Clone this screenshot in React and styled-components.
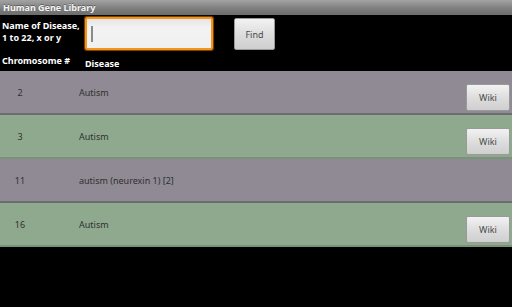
import React from "react";
import styled, { createGlobalStyle } from "styled-components";

const Global = createGlobalStyle`
  html, body { margin: 0; padding: 0; background: #000; }
  body { font-family: "Noto Sans", "Open Sans", "DejaVu Sans", sans-serif; }
  * { box-sizing: border-box; }
`;

const Screen = styled.div`
  width: 512px;
  height: 307px;
  background: #000;
  display: flex;
  flex-direction: column;
  overflow: hidden;
`;

const TitleBar = styled.div`
  height: 15px;
  padding-left: 3px;
  display: flex;
  align-items: center;
  background: linear-gradient(#a3a3a3, #7c7c7c 60%, #6c6c6c);
  color: #f4f4f4;
  font-size: 9px;
  font-weight: 700;
  text-shadow: 0 -1px 0 rgba(0,0,0,0.35);
`;

const SearchRow = styled.div`
  height: 37px;
  display: flex;
  align-items: flex-start;
`;

const Label = styled.div`
  width: 85px;
  padding-left: 2px;
  margin-top: 5px;
  color: #fff;
  font-size: 9px;
  font-weight: 700;
  line-height: 12px;
`;

const Input = styled.div`
  margin-top: 2px;
  width: 128px;
  height: 33px;
  border: 2px solid #f7921c;
  border-radius: 2px;
  background: linear-gradient(#e4e4e4, #f3f3f3 30%, #f0f0f0);
  box-shadow: 0 0 1px 1px rgba(255, 150, 0, 0.5);
  display: flex;
  align-items: center;
  padding-left: 4px;
`;

const Caret = styled.span`
  width: 2px;
  height: 16px;
  background: #8a8a8a;
`;

const Button = styled.div`
  width: ${(p) => p.$w}px;
  height: ${(p) => p.$h}px;
  margin-top: ${(p) => p.$top}px;
  margin-left: ${(p) => p.$left || 0}px;
  margin-right: ${(p) => p.$right || 0}px;
  border: 1px solid #9a9a9a;
  border-radius: 2px;
  background: linear-gradient(#f2f2f2, #dcdcdc 55%, #cfcfcf);
  color: #4a4a4a;
  font-size: 9px;
  display: flex;
  align-items: center;
  justify-content: center;
  flex-shrink: 0;
`;

const HeaderRow = styled.div`
  height: 19px;
  display: flex;
`;

const HeaderCell = styled.div`
  width: ${(p) => p.$w}px;
  padding-left: 2px;
  padding-top: ${(p) => p.$top}px;
  color: #fff;
  font-size: 9px;
  font-weight: 700;
  line-height: 10px;
`;

const Row = styled.div`
  height: 44px;
  display: flex;
  align-items: flex-start;
  background: ${(p) => (p.$green ? "#8fa98e" : "#8f8a93")};
  border-bottom: 2px solid ${(p) => (p.$green ? "#789377" : "#6e6a72")};
  color: #303030;
  font-size: 9px;
`;

const NumCell = styled.div`
  width: 40px;
  height: 42px;
  padding-top: 1px;
  text-align: center;
  line-height: 42px;
`;

const DiseaseCell = styled.div`
  flex: 1;
  height: 42px;
  padding-top: 1px;
  padding-left: 39px;
  line-height: 42px;
`;

const rows = [
  { n: "2", d: "Autism", wiki: true },
  { n: "3", d: "Autism", wiki: true },
  { n: "11", d: "autism (neurexin 1) [2]", wiki: false },
  { n: "16", d: "Autism", wiki: true },
];

export default function App() {
  return (
    <Screen>
      <Global />
      <TitleBar>Human Gene Library</TitleBar>
      <SearchRow>
        <Label>
          Name of Disease,
          <br />1 to 22, x or y
        </Label>
        <Input>
          <Caret />
        </Input>
        <Button $w={41} $h={32} $top={3} $left={21}>
          Find
        </Button>
      </SearchRow>
      <HeaderRow>
        <HeaderCell $w={83} $top={4}>Chromosome #</HeaderCell>
        <HeaderCell $w={100} $top={7}>Disease</HeaderCell>
      </HeaderRow>
      {rows.map((r, i) => (
        <Row key={i} $green={i % 2 === 1}>
          <NumCell>{r.n}</NumCell>
          <DiseaseCell>{r.d}</DiseaseCell>
          {r.wiki && (
            <Button $w={44} $h={27} $top={13} $right={2}>
              Wiki
            </Button>
          )}
        </Row>
      ))}
    </Screen>
  );
}
